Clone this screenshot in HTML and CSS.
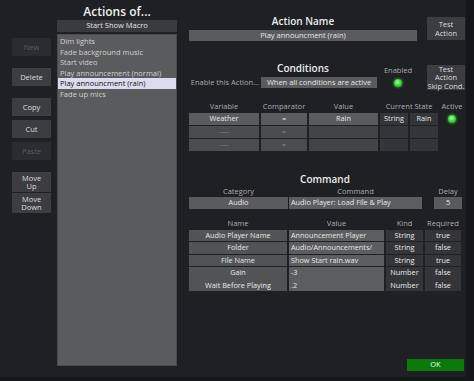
FILE: index.html
```html
<!DOCTYPE html>
<html lang="en">

<head>
   <meta charset="UTF-8">
   <meta name="viewport" content="width=device-width, initial-scale=1.0">
   <title>Macro Editor</title>

   <link rel="stylesheet" href="styles.css">
</head>

<body>
   <div class="window">

      <div class="tools">
         <div class="tools__group">
            <div class="btn btn--off">New</div>
         </div>
         <div class="tools__group">
            <div class="btn">Delete</div>
         </div>
         <div class="tools__group">
            <div class="btn">Copy</div>
            <div class="btn">Cut</div>
            <div class="btn btn--off">Paste</div>
         </div>
         <div class="tools__group tools__group--tight">
            <div class="btn btn--tall">Move<br>Up</div>
            <div class="btn btn--tall">Move<br>Down</div>
         </div>
      </div>

      <div class="macro">
         <div class="macro__title">Actions of...</div>
         <div class="macro__name">Start Show Macro</div>
         <ul class="macro__list">
            <li class="macro__item">Dim lights</li>
            <li class="macro__item">Fade background music</li>
            <li class="macro__item">Start video</li>
            <li class="macro__item">Play announcement (normal)</li>
            <li class="macro__item macro__item--active">Play announcment (rain)</li>
            <li class="macro__item">Fade up mics</li>
         </ul>
      </div>

      <div class="editor">

         <div class="name__row">
            <div class="name__main">
               <div class="heading">Action Name</div>
               <div class="field name__field">Play announcment (rain)</div>
            </div>
            <div class="btn side__btn">Test<br>Action</div>
         </div>

         <div class="cond__row">
            <div class="cond__grid">
               <div class="heading cond__heading">Conditions</div>
               <div class="label enabled__label">Enabled</div>
               <div class="label cond__label">Enable this Action...</div>
               <div class="field cond__select">When all conditions are active</div>
               <div class="led cond__led"></div>
            </div>
            <div class="btn side__btn side__btn--tall">Test<br>Action<br>Skip Cond.</div>
         </div>

         <div class="var__grid">
            <div class="label">Variable</div>
            <div class="label">Comparator</div>
            <div class="label">Value</div>
            <div class="label var__state-head">Current State</div>
            <div class="label">Active</div>

            <div class="cell">Weather</div>
            <div class="cell">=</div>
            <div class="cell">Rain</div>
            <div class="cell cell--dark">String</div>
            <div class="cell cell--dark">Rain</div>
            <div class="var__active"><div class="led"></div></div>

            <div class="cell cell--dim">----</div>
            <div class="cell cell--dim">=</div>
            <div class="cell cell--empty"></div>
            <div class="cell cell--dark"></div>
            <div class="cell cell--dark"></div>
            <div></div>

            <div class="cell cell--dim">----</div>
            <div class="cell cell--dim">=</div>
            <div class="cell cell--empty"></div>
            <div class="cell cell--dark"></div>
            <div class="cell cell--dark"></div>
            <div></div>
         </div>

         <div class="command">
            <div class="heading">Command</div>

            <div class="cmd__grid">
               <div class="label">Category</div>
               <div class="label">Command</div>
               <div class="label cmd__delay">Delay</div>

               <div class="cell">Audio</div>
               <div class="cell cell--left">Audio Player: Load File &amp; Play</div>
               <div class="cell cmd__delay">5</div>
            </div>

            <div class="param__grid">
               <div class="label">Name</div>
               <div class="label">Value</div>
               <div class="label">Kind</div>
               <div class="label">Required</div>

               <div class="cell cell--name">Audio Player Name</div>
               <div class="cell cell--left">Announcement Player</div>
               <div class="cell cell--dark">String</div>
               <div class="cell cell--dark">true</div>

               <div class="cell cell--name">Folder</div>
               <div class="cell cell--left">Audio/Announcements/</div>
               <div class="cell cell--dark">String</div>
               <div class="cell cell--dark">false</div>

               <div class="cell cell--name">File Name</div>
               <div class="cell cell--left">Show Start rain.wav</div>
               <div class="cell cell--dark">String</div>
               <div class="cell cell--dark">true</div>

               <div class="cell cell--name">Gain</div>
               <div class="cell cell--left">-3</div>
               <div class="cell cell--dark">Number</div>
               <div class="cell cell--dark">false</div>

               <div class="cell cell--name">Wait Before Playing</div>
               <div class="cell cell--left">.2</div>
               <div class="cell cell--dark">Number</div>
               <div class="cell cell--dark">false</div>
            </div>
         </div>

         <div class="ok__button">OK</div>
      </div>

   </div>
</body>

</html>
```

FILE: styles.css
```css
* {
   font-family: "Open Sans", "Liberation Sans", sans-serif;
   box-sizing: border-box;
   line-height: 1;
   padding: 0;
   margin: 0;
}

body {
   background-color: #151619;
   width: 474px;
   height: 381px;
   overflow: hidden;
}

.window {
   width: 466px;
   height: 377px;
   background-color: #1f2023;
   display: flex;
}

/* left button column */
.tools {
   width: 39px;
   margin-left: 12px;
   padding-top: 38px;
   display: flex;
   flex-direction: column;
   gap: 12px;
}

.tools__group {
   display: flex;
   flex-direction: column;
   gap: 4px;
}

.tools__group--tight {
   gap: 1px;
}

.btn {
   height: 18px;
   background-color: #3c3d40;
   color: #dcdcdc;
   font-size: 7.5px;
   line-height: 8.5px;
   display: flex;
   align-items: center;
   justify-content: center;
   text-align: center;
}

.btn--off {
   background-color: #2b2c2f;
   color: #5c5d60;
}

.btn--tall {
   height: 20px;
}

/* action list */
.macro {
   width: 120px;
   margin-left: 6px;
   padding-top: 4px;
   padding-bottom: 11px;
   display: flex;
   flex-direction: column;
}

.macro__title {
   font-size: 12px;
   font-weight: 600;
   line-height: 16px;
   text-align: center;
   color: #efefef;
}

.macro__name {
   height: 12px;
   background-color: #3a3b3e;
   color: #e2e2e2;
   font-size: 7.5px;
   display: flex;
   align-items: center;
   justify-content: center;
}

.macro__list {
   list-style: none;
   margin-top: 2px;
   flex: 1;
   background-color: #5a5b5d;
   border: 1px solid #4a4b4d;
   padding-top: 1px;
}

.macro__item {
   font-size: 7.5px;
   line-height: 10.6px;
   padding-left: 2px;
   color: #d2d2d2;
   white-space: nowrap;
}

.macro__item--active {
   background-color: #dcdcf0;
   color: #111;
}

/* editor */
.editor {
   width: 277px;
   margin-left: 12px;
   padding-top: 14px;
   padding-bottom: 6px;
   display: flex;
   flex-direction: column;
}

.heading {
   font-size: 10px;
   font-weight: 600;
   line-height: 14px;
   text-align: center;
   color: #ececec;
}

.label {
   font-size: 7.5px;
   color: #acacac;
   text-align: center;
   white-space: nowrap;
   align-self: center;
}

.field {
   height: 11px;
   background-color: #5a5b5d;
   color: #e6e6e6;
   font-size: 7.5px;
   display: flex;
   align-items: center;
   justify-content: center;
   white-space: nowrap;
}

.name__row {
   display: flex;
   gap: 10px;
}

.name__main {
   width: 228px;
}

.name__field {
   margin-top: 2px;
}

.side__btn {
   width: 38px;
   height: 23px;
   margin-top: 3px;
}

.side__btn--tall {
   height: 25px;
   margin-top: 4px;
}

.cond__row {
   display: flex;
   gap: 10px;
   margin-top: 20px;
}

.cond__grid {
   width: 228px;
   display: grid;
   grid-template-columns: 70px 116px 1fr;
   grid-template-rows: 14px 13px;
   column-gap: 2px;
   row-gap: 1px;
}

.cond__heading {
   grid-column: 1 / -1;
   grid-row: 1;
}

.enabled__label {
   grid-column: 3;
   grid-row: 1;
   align-self: end;
   margin-bottom: 1px;
}

.cond__label {
   grid-column: 1;
   grid-row: 2;
   text-align: right;
}

.cond__select {
   grid-column: 2;
   grid-row: 2;
   align-self: center;
}

.cond__led {
   grid-column: 3;
   grid-row: 2;
   justify-self: center;
   align-self: center;
}

.led {
   width: 8px;
   height: 8px;
   border-radius: 50%;
   background: radial-gradient(circle at 45% 40%, #b4ffb4, #35e135 45%, #1fa51f);
   box-shadow: 0 0 3px #39d839;
}

.var__grid {
   margin-top: 12px;
   display: grid;
   grid-template-columns: 70px 46px 69px 28px 28px 24px;
   grid-template-rows: 10px 12px 12px 12px;
   column-gap: 2px;
   row-gap: 1px;
}

.var__state-head {
   grid-column: span 2;
}

.var__active {
   display: flex;
   align-items: center;
   justify-content: center;
}

.cell {
   background-color: #5a5b5d;
   color: #e8e8e8;
   font-size: 7.3px;
   display: flex;
   align-items: center;
   justify-content: center;
   white-space: nowrap;
   overflow: hidden;
}

.cell--left {
   justify-content: flex-start;
   padding-left: 2px;
   background-color: #5c5d5f;
}

.cell--name {
   background-color: #525355;
}

.cell--dim {
   background-color: #4b4c4e;
   color: #8c8c8c;
}

.cell--empty {
   background-color: #434446;
}

.cell--dark {
   background-color: #343538;
}

.command {
   width: 272px;
   margin-top: 21px;
}

.cmd__grid {
   margin-top: 1px;
   display: grid;
   grid-template-columns: 99px 133px 10px 28px;
   grid-template-rows: 10px 12px;
   column-gap: 1px;
}

.cmd__delay {
   grid-column: 4;
}

.param__grid {
   margin-top: 10px;
   display: grid;
   grid-template-columns: 98px 95px 37px 36px;
   grid-template-rows: 10px repeat(5, 11.6px);
   column-gap: 2px;
   row-gap: 0.8px;
}

.ok__button {
   margin-top: auto;
   margin-right: 2px;
   align-self: flex-end;
   width: 57px;
   height: 12px;
   background-color: #0b7a0b;
   color: #e8ffe8;
   font-size: 7.5px;
   display: flex;
   align-items: center;
   justify-content: center;
}
```
